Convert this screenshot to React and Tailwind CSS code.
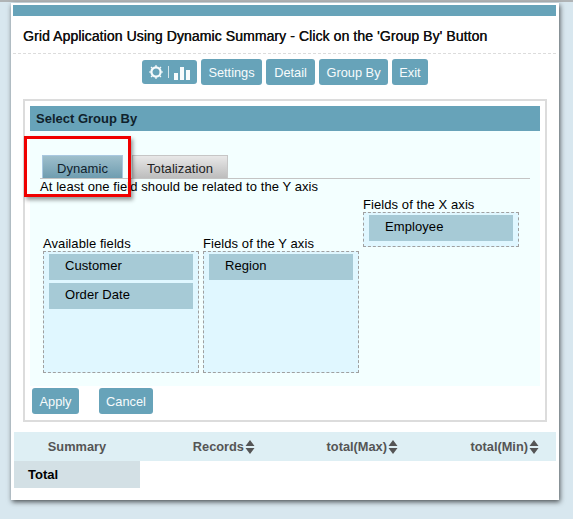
function Sort() {
  return (
    <svg width="10" height="16" viewBox="0 0 10 16" className="shrink-0">
      <path d="M5 1 L9.5 7 H0.5 Z M0.5 9 H9.5 L5 15 Z" fill="#555" />
    </svg>
  );
}

function Btn({ children, className = "" }) {
  return (
    <button className={`h-[26px] rounded-[3px] bg-[#67a3b9] pt-[2px] text-[#f7fbfc] text-[12.8px] font-['Liberation_Sans',sans-serif] ${className}`}>
      {children}
    </button>
  );
}

function FieldBox({ items, className = "" }) {
  return (
    <div className={`w-[156px] border border-dashed border-[#a0a0a0] bg-[#e0f7ff] px-[5px] pt-[2px] flex flex-col gap-[3px] ${className}`}>
      {items.map((t) => (
        <div key={t} className="h-[26px] bg-[#a6cad6] pl-[16px] leading-[23px] text-[13px] text-black">{t}</div>
      ))}
    </div>
  );
}

export default function App() {
  return (
    <div className="relative h-[519px] w-[573px] overflow-hidden bg-[#d8e7ef] font-['Liberation_Sans',Arial,sans-serif] text-black">
      <div className="h-[2px] bg-[#b0b4b6]" />
      <div className="ml-[11px] mt-[1px] h-[497px] w-[548px] bg-white pt-[2px] px-[2px] shadow-[1px_2px_5px_rgba(0,0,0,0.65)]">
        <div className="h-[11px] w-[543px] bg-[#67a3b9]" />
        <div className="flex h-[38px] w-[543px] items-center border-b border-dashed border-[#dcdcdc] pl-[10px] pt-[2px] text-[14px] leading-none tracking-[0.085px] text-[#111]">
          <span className="[text-shadow:0.35px_0_0_#111]">Grid Application Using Dynamic Summary - Click on the 'Group By' Button</span>
        </div>
        <div className="mt-[5px] flex h-[26px] w-[543px] items-center justify-center gap-[4px] pl-[1px]">
          <button className="flex h-[24px] w-[55px] items-center justify-center gap-[5px] rounded-[3px] bg-[#67a3b9]">
            <svg width="14" height="14" viewBox="0 0 14 14">
              <circle cx="7" cy="7" r="4.6" fill="none" stroke="#f7fbfc" strokeWidth="2.2" />
              <path d="M7 0v2M7 12v2M0 7h2M12 7h2M2 2l1.500 1.500M10.500 10.500L12 12M2 12l1.500-1.500M10.500 3.500L12 2" stroke="#f7fbfc" strokeWidth="1.200" />
            </svg>
            <span className="h-[12px] w-px bg-[#d5e6ec]" />
            <svg width="16" height="15" viewBox="0 0 16 15">
              <path d="M0 8h4v7H0zM6 2h4v13H6zM12 5h4v10h-4z" fill="#f7fbfc" />
            </svg>
          </button>
          <Btn className="w-[61px]">Settings</Btn>
          <Btn className="w-[49px]">Detail</Btn>
          <Btn className="w-[69px]">Group By</Btn>
          <Btn className="w-[36px]">Exit</Btn>
        </div>
        <div className="ml-[10px] mt-[14px] h-[323px] w-[524px] border-2 border-[#dcdcdc] px-[5px] pt-[5px]">
          <div className="h-[25px] w-[510px] bg-[#67a3b9] pl-[6px] text-[13px] font-bold leading-[25px] text-[#10222c]">Select Group By</div>
          <div className="h-[255px] w-[510px] bg-[#f3ffff] pl-[10px] pt-[24px] text-[13px] leading-[14px] tracking-[0.08px]">
            <div className="flex h-[24px] w-[490px] items-end border-b border-[#c4c4c4] pl-[2px]">
              <div className="h-[23px] w-[81px] border border-[#a9c8e0] border-b-0 bg-gradient-to-b from-[#9ebfcc] to-[#6f9db0] text-center leading-[26px] text-[#10222c]">Dynamic</div>
              <div className="ml-[9px] h-[23px] w-[96px] border border-[#c6c6c6] border-b-0 bg-gradient-to-b from-[#e8e8e8] to-[#bdbdbd] text-center leading-[26px] text-[#222]">Totalization</div>
            </div>
            <div className="h-[14px] pt-[1px]">At least one field should be related to the Y axis</div>
            <div className="mt-[4px] flex gap-[4px] pl-[3px]">
              <div className="mt-[39px]">
                <div className="h-[14px] pt-[1px]">Available fields</div>
                <FieldBox items={["Customer", "Order Date"]} className="mt-[1px] h-[122px]" />
              </div>
              <div className="mt-[39px]">
                <div className="h-[14px] pt-[1px]">Fields of the Y axis</div>
                <FieldBox items={["Region"]} className="mt-[1px] h-[122px]" />
              </div>
              <div>
                <div className="h-[14px] pt-[1px]">Fields of the X axis</div>
                <FieldBox items={["Employee"]} className="mt-[1px] h-[35px]" />
              </div>
            </div>
          </div>
          <div className="ml-[2px] mt-[2px] flex gap-[20px]">
            <Btn className="w-[47px]">Apply</Btn>
            <Btn className="w-[54px]">Cancel</Btn>
          </div>
        </div>
        <div className="ml-[1px] mt-[10px] flex h-[29px] w-[542px] items-center bg-[#deeff4] text-[12.8px] font-bold text-[#555]">
          <div className="w-[126px] text-center">Summary</div>
          <div className="flex w-[115px] items-center justify-end gap-[1px]"><span>Records</span><Sort /></div>
          <div className="flex w-[143px] items-center justify-end gap-[1px]"><span>total(Max)</span><Sort /></div>
          <div className="flex w-[141px] items-center justify-end gap-[1px]"><span>total(Min)</span><Sort /></div>
        </div>
        <div className="ml-[1px] h-[27px] w-[126px] bg-[#d3e0e5] pl-[14px] text-[13px] font-bold leading-[27px] text-black">Total</div>
      </div>
      <div className="absolute left-[24px] top-[136px] h-[61px] w-[107px] border-[3px] border-[#f00000] shadow-[2px_3px_4px_rgba(0,0,0,0.4)]" />
    </div>
  );
}
